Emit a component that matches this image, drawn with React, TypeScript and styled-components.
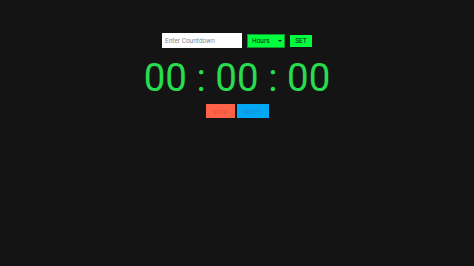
import React, { useState } from "react";
import styled, { createGlobalStyle } from "styled-components";

const GlobalStyle = createGlobalStyle`
  html, body {
    margin: 0;
    padding: 0;
    background: #141414;
    font-family: Roboto, "Liberation Sans", sans-serif;
  }
`;

const Page = styled.div`
  width: 474px;
  height: 266px;
  background: #141414;
  display: flex;
  flex-direction: column;
  align-items: center;
  padding-top: 33px;
  box-sizing: border-box;
`;

const Controls = styled.div`
  display: flex;
  flex-direction: row;
  align-items: center;
  gap: 5px;
`;

const CountInput = styled.input`
  display: block;
  width: 80px;
  height: 15px;
  box-sizing: border-box;
  border: none;
  outline: none;
  padding: 0 3px;
  font-family: Roboto, "Liberation Sans", sans-serif;
  font-size: 6.5px;
  background: #ffffff;

  &::placeholder {
    color: #8a8a8a;
  }
`;

const SelectWrap = styled.div`
  position: relative;
  width: 38px;
  height: 14px;
`;

const UnitSelect = styled.select`
  display: block;
  appearance: none;
  -webkit-appearance: none;
  width: 100%;
  height: 100%;
  margin: 0;
  box-sizing: border-box;
  border: 1px solid #0c9a2a;
  background: #00ff3c;
  font-family: Roboto, "Liberation Sans", sans-serif;
  font-size: 6.5px;
  padding: 0 0 0 4px;
  color: #111;
  border-radius: 0;
  outline: none;
`;

const Caret = styled.span`
  position: absolute;
  right: 3px;
  top: 6px;
  width: 0;
  height: 0;
  border-left: 2px solid transparent;
  border-right: 2px solid transparent;
  border-top: 2px solid #222;
  pointer-events: none;
`;

const SetButton = styled.button`
  display: block;
  width: 22px;
  height: 12px;
  box-sizing: border-box;
  border: none;
  padding: 0;
  background: #00ff3c;
  color: #111;
  font-family: Roboto, "Liberation Sans", sans-serif;
  font-size: 6.5px;
  cursor: pointer;
`;

const Display = styled.div`
  margin-top: 6px;
  font-size: 38.5px;
  line-height: 47px;
  color: #28dc50;
  font-family: Roboto, "Liberation Sans", sans-serif;
  white-space: pre;
`;

const Actions = styled.div`
  display: flex;
  flex-direction: row;
  gap: 2px;
  margin-top: 3px;
`;

const ActionButton = styled.button<{ $bg: string; $fg: string; $w: number }>`
  width: ${(p) => p.$w}px;
  height: 14px;
  box-sizing: border-box;
  border: none;
  padding: 0;
  background: ${(p) => p.$bg};
  color: ${(p) => p.$fg};
  font-family: Roboto, "Liberation Sans", sans-serif;
  font-size: 6px;
  cursor: pointer;
`;

const pad = (n: number) => ("0" + n).slice(-2);

const App: React.FC = () => {
  const [seconds] = useState(0);
  const h = Math.floor(seconds / 3600);
  const m = Math.floor((seconds % 3600) / 60);
  const s = seconds % 60;

  return (
    <>
      <GlobalStyle />
      <Page>
        <Controls>
          <CountInput placeholder="Enter Countdown" />
          <SelectWrap>
            <UnitSelect defaultValue="hours">
              <option value="hours">Hours</option>
              <option value="minutes">Minutes</option>
              <option value="seconds">Seconds</option>
            </UnitSelect>
            <Caret />
          </SelectWrap>
          <SetButton>SET</SetButton>
        </Controls>
        <Display>{`${pad(h)} : ${pad(m)} : ${pad(s)}`}</Display>
        <Actions>
          <ActionButton $bg="#ff6347" $fg="#d9503b" $w={29}>
            STOP
          </ActionButton>
          <ActionButton $bg="#03a9f4" $fg="#1f8fd0" $w={32}>
            RESET
          </ActionButton>
        </Actions>
      </Page>
    </>
  );
};

export default App;
